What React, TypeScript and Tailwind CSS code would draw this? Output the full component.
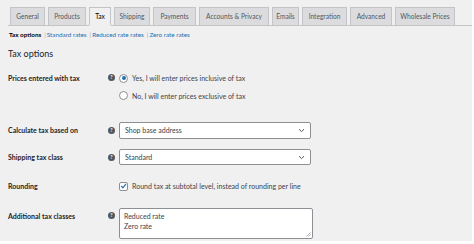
import React from "react";

const tabs: [string, string][] = [
  ["General", "w-[35px]"],
  ["Products", "w-[38px]"],
  ["Tax", "w-[22px]"],
  ["Shipping", "w-[36px]"],
  ["Payments", "w-[43px]"],
  ["Accounts & Privacy", "w-[70px]"],
  ["Emails", "w-[27px]"],
  ["Integration", "w-[45px]"],
  ["Advanced", "w-[42px]"],
  ["Wholesale Prices", "w-[60px]"],
];

function Help() {
  return (
    <span className="w-[7px] h-[7px] shrink-0 rounded-full bg-[#50575e] text-white text-[5px] font-bold flex items-center justify-center leading-none">
      ?
    </span>
  );
}

function Chevron() {
  return (
    <svg width="7" height="5" viewBox="0 0 7 5" className="text-[#50575e]">
      <path d="M1 1.2 L3.5 3.6 L6 1.2" fill="none" stroke="currentColor" strokeWidth="1" />
    </svg>
  );
}

function Label({ children }: { children: React.ReactNode }) {
  return <div className="w-[100px] shrink-0 font-bold text-[#1d2327]">{children}</div>;
}

export default function App() {
  return (
    <div
      className="w-[474px] h-[244px] bg-white overflow-hidden"
      style={{ fontFamily: 'Lato, "Open Sans", sans-serif' }}
    >
      <div className="w-[472px] h-[241px] bg-[#f0f0f1] text-[7px] text-[#3c434a] pl-[8px]">
        <div className="flex items-end pt-[7px] border-b border-[#c3c4c7] pl-[2px] gap-[3px] whitespace-nowrap text-[6.6px]">
          {tabs.map(([t, w]) =>
            t === "Tax" ? (
              <div
                key={t}
                className={`${w} h-[19px] -mb-px flex items-center justify-center border border-[#c3c4c7] border-b-[#f0f0f1] bg-[#f0f0f1] text-[#000]`}
              >
                {t}
              </div>
            ) : (
              <div
                key={t}
                className={`${w} h-[18px] flex items-center justify-center border border-b-0 border-[#c3c4c7] bg-[#dcdcde] text-[#50575e]`}
              >
                {t}
              </div>
            )
          )}
        </div>
        <div className="flex items-center mt-[4px] h-[10px] text-[6.3px] pl-[1px] whitespace-nowrap">
          <span className="font-bold text-[#000]">Tax options</span>
          <span className="text-[#a7aaad] ml-[3px] mr-[1px]">|</span>
          <span className="text-[#2271b1]">Standard rates</span>
          <span className="text-[#a7aaad] ml-[3px] mr-[1px]">|</span>
          <span className="text-[#2271b1]">Reduced rate rates</span>
          <span className="text-[#a7aaad] ml-[3px] mr-[1px]">|</span>
          <span className="text-[#2271b1]">Zero rate rates</span>
        </div>
        <div className="mt-[7px] text-[9px] text-[#1d2327] leading-[14px]">Tax options</div>

        <div className="flex mt-[12px]">
          <Label>Prices entered with tax</Label>
          <div className="flex items-start pt-[1px]">
            <Help />
          </div>
          <div className="ml-[4px] flex flex-col gap-[7px]">
            <div className="flex items-center gap-[4px]">
              <span className="w-[9px] h-[9px] rounded-full border border-[#8c8f94] bg-white flex items-center justify-center">
                <span className="w-[4px] h-[4px] rounded-full bg-[#2271b1]" />
              </span>
              <span>Yes, I will enter prices inclusive of tax</span>
            </div>
            <div className="flex items-center gap-[4px]">
              <span className="w-[9px] h-[9px] rounded-full border border-[#8c8f94] bg-white" />
              <span>No, I will enter prices exclusive of tax</span>
            </div>
          </div>
        </div>

        <div className="flex items-center mt-[21px]">
          <Label>Calculate tax based on</Label>
          <Help />
          <div className="ml-[4px] w-[192px] h-[17px] rounded-[2px] border border-[#8c8f94] bg-white flex items-center justify-between px-[5px]">
            <span>Shop base address</span>
            <Chevron />
          </div>
        </div>

        <div className="flex items-center mt-[10px]">
          <Label>Shipping tax class</Label>
          <Help />
          <div className="ml-[4px] w-[192px] h-[16px] rounded-[2px] border border-[#8c8f94] bg-white flex items-center justify-between px-[5px]">
            <span>Standard</span>
            <Chevron />
          </div>
        </div>

        <div className="flex items-center mt-[16px]">
          <Label>Rounding</Label>
          <div className="w-[7px]" />
          <div className="ml-[4px] flex items-center gap-[4px]">
            <span className="w-[9px] h-[9px] rounded-[2px] border border-[#8c8f94] bg-white flex items-center justify-center">
              <svg width="8" height="8" viewBox="0 0 8 8">
                <path d="M1.5 4 L3.3 6 L6.8 1.5" fill="none" stroke="#2271b1" strokeWidth="1.3" />
              </svg>
            </span>
            <span>Round tax at subtotal level, instead of rounding per line</span>
          </div>
        </div>

        <div className="flex items-start mt-[16px]">
          <Label>
            <div className="pt-[3px]">Additional tax classes</div>
          </Label>
          <div className="pt-[4px]">
            <Help />
          </div>
          <div className="relative ml-[4px] w-[194px] h-[31px] rounded-[2px] border border-[#8c8f94] bg-white px-[4px] pt-[2px] leading-[10px]">
            <div>Reduced rate</div>
            <div>Zero rate</div>
            <svg width="5" height="5" viewBox="0 0 5 5" className="absolute right-[1px] bottom-[1px]">
              <path d="M0.5 4.5 L4.5 0.5 M2.5 4.5 L4.5 2.5" stroke="#8c8f94" strokeWidth="0.7" />
            </svg>
          </div>
        </div>
      </div>
    </div>
  );
}
